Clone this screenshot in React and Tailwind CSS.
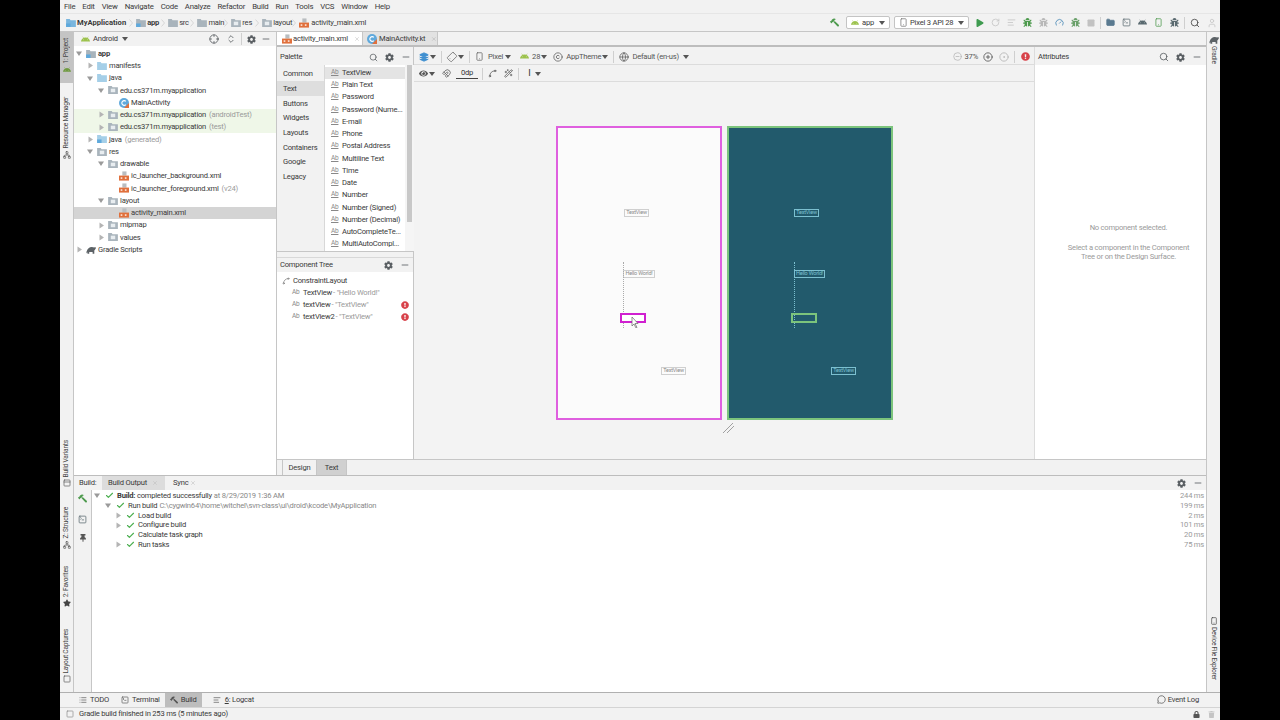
import { FaCog, FaBug, FaStar, FaThumbtack, FaAndroid, FaHammer, FaPlay, FaStop, FaEye, FaLock, FaTrash, FaExclamationCircle } from 'react-icons/fa'
import { Search, Minus, Crosshair, ChevronsUpDown, X, Layers, Smartphone, Globe, Copyright, RotateCw, AlignLeft, Gauge, Folder, SquareTerminal, User, Magnet, Wand2, CirclePlus, CircleMinus, CircleDot, List, MessageCircle, Square, Check, Spline, PanelTop, Network } from 'lucide-react'

const Arrow = ({ open }) => (
  <svg width="7" height="7" viewBox="0 0 7 7" className="shrink-0">
    {open ? <path d="M0 1.5h6L3 6z" fill="#9a9a9a" /> : <path d="M1.5 0.5v6L6 3.5z" fill="#b4b4b4" />}
  </svg>
)

const Caret = () => (
  <svg width="6" height="4" viewBox="0 0 6 4" className="shrink-0"><path d="M0 0h6L3 4z" fill="#555" /></svg>
)

const FolderIcon = ({ color = '#a9b4bc', dot = false, corner = false }) => (
  <svg width="10" height="8" viewBox="0 0 11 9" className="shrink-0">
    <path d="M0 0h4l1 1.5h6V9H0z" fill={color} />
    {dot && <rect x="3" y="3" width="5" height="4" fill="#e8edf0" />}
    {corner && <rect x="0" y="5" width="5" height="4" fill="#5fa9dc" />}
  </svg>
)

const XmlIcon = () => (
  <svg width="10" height="10" viewBox="0 0 12 11" className="shrink-0">
    <path d="M4 0h5v5H4z" fill="#b9bdc0" />
    <rect x="0" y="5" width="12" height="6" fill="#e0703c" />
    <rect x="2" y="7" width="2" height="2" fill="#fbe2d6" />
    <rect x="7" y="7" width="2" height="2" fill="#fbe2d6" />
  </svg>
)

const ClassIcon = () => (
  <svg width="10" height="10" viewBox="0 0 10 10" className="shrink-0">
    <circle cx="5" cy="5" r="5" fill="#5fa9dc" />
    <path d="M6.8 3.4A2.3 2.3 0 1 0 6.8 6.6" stroke="#fff" strokeWidth="1.2" fill="none" />
    <path d="M5 10l5-5v5z" fill="#e0703c" />
  </svg>
)

const Turtle = () => (
  <svg width="11" height="8" viewBox="0 0 13 9" className="shrink-0">
    <path d="M1 9l1-3c1-3 3-5 6-5 2 0 3 1 4 0l1 1-1 2-1 1v4h-2V7H5v2H3l-.5-2z" fill="#5c6266" />
  </svg>
)

const Chev = ({ className = '' }) => (
  <svg width="10" height="10" viewBox="0 0 10 10" className={`shrink-0 ${className}`}><path d="M3.5 1.5L6.5 5l-3 3.5" stroke="#cfcfcf" strokeWidth="0.8" fill="none" /></svg>
)

const treeRows = [
  { d: 0, arrow: 'open', icon: <FolderIcon corner />, label: 'app', bold: true },
  { d: 1, arrow: 'closed', icon: <FolderIcon color="#a5cfe8" />, label: 'manifests' },
  { d: 1, arrow: 'open', icon: <FolderIcon color="#a5cfe8" />, label: 'java' },
  { d: 2, arrow: 'open', icon: <FolderIcon dot />, label: 'edu.cs371m.myapplication' },
  { d: 3, icon: <ClassIcon />, label: 'MainActivity' },
  { d: 2, arrow: 'closed', icon: <FolderIcon dot />, label: 'edu.cs371m.myapplication', note: '(androidTest)', green: true },
  { d: 2, arrow: 'closed', icon: <FolderIcon dot />, label: 'edu.cs371m.myapplication', note: '(test)', green: true },
  { d: 1, arrow: 'closed', icon: <FolderIcon color="#a5cfe8" corner />, label: 'java', note: '(generated)' },
  { d: 1, arrow: 'open', icon: <FolderIcon dot />, label: 'res' },
  { d: 2, arrow: 'open', icon: <FolderIcon dot />, label: 'drawable' },
  { d: 3, icon: <XmlIcon />, label: 'ic_launcher_background.xml' },
  { d: 3, icon: <XmlIcon />, label: 'ic_launcher_foreground.xml', note: '(v24)' },
  { d: 2, arrow: 'open', icon: <FolderIcon dot />, label: 'layout' },
  { d: 3, icon: <XmlIcon />, label: 'activity_main.xml', selected: true },
  { d: 2, arrow: 'closed', icon: <FolderIcon dot />, label: 'mipmap' },
  { d: 2, arrow: 'closed', icon: <FolderIcon dot />, label: 'values' },
  { d: 0, arrow: 'closed', icon: <Turtle />, label: 'Gradle Scripts' },
]

const paletteGroups = ['Common', 'Text', 'Buttons', 'Widgets', 'Layouts', 'Containers', 'Google', 'Legacy']
const paletteItems = ['TextView', 'Plain Text', 'Password', 'Password (Nume...', 'E-mail', 'Phone', 'Postal Address', 'Multiline Text', 'Time', 'Date', 'Number', 'Number (Signed)', 'Number (Decimal)', 'AutoCompleteTe...', 'MultiAutoCompl...']

const SideLabel = ({ children, icon, className = '' }) => (
  <div className={`flex flex-col items-center gap-[2px] text-[6.6px] leading-[13px] text-[#444] whitespace-nowrap ${className}`}>
    <span className="[writing-mode:vertical-rl] rotate-180">{children}</span>
    {icon}
  </div>
)

const Gear = () => <FaCog size={9} color="#5a5f63" />
const Dash = () => <Minus size={10} color="#5a5f63" strokeWidth={2} />
const Sep = ({ className = '' }) => <div className={`w-px h-[12px] bg-[#cfcfcf] shrink-0 ${className}`} />
const Err = ({ size = 9 }) => <FaExclamationCircle size={size} color="#d8424a" />

const TextBox = ({ className, children }) => (
  <div className={`absolute h-[8px] border flex items-center justify-center text-[5.5px] leading-none whitespace-nowrap ${className}`}>{children}</div>
)

export default function App() {
  return (
    <div className="w-[1280px] h-[720px] bg-black flex justify-center overflow-hidden font-['Roboto',sans-serif]">
      <div className="w-[1160px] h-[720px] bg-[#f2f2f2] flex flex-col text-[7.6px] tracking-[-0.22px] text-[#3a3a3a] relative">
        {/* Menu */}
        <div className="h-[13px] shrink-0 flex items-center pl-[4px] gap-[7px] leading-none text-[7.8px]">
          {['File', 'Edit', 'View', 'Navigate', 'Code', 'Analyze', 'Refactor', 'Build', 'Run', 'Tools', 'VCS', 'Window', 'Help'].map(m => (
            <span key={m}>{m}</span>
          ))}
        </div>

        {/* Nav bar and run toolbar */}
        <div className="h-[19px] shrink-0 flex items-center pl-[6px] border-t border-b border-t-[#e6e6e6] border-b-[#c6c6c6]">
          <FolderIcon color="#7ab6de" corner />
          <span className="font-bold ml-[1px] tracking-normal">MyApplication</span>
          <Chev />
          <FolderIcon corner />
          <span className="font-bold ml-[1px]">app</span>
          <Chev className="-ml-[1px]" />
          <FolderIcon />
          <span className="ml-[1px]">src</span>
          <Chev className="-ml-[1.5px]" />
          <FolderIcon />
          <span className="ml-[1px]">main</span>
          <Chev className="-ml-[3px]" />
          <FolderIcon dot />
          <span className="ml-[1px]">res</span>
          <Chev />
          <FolderIcon dot />
          <span className="ml-[1px]">layout</span>
          <Chev className="-ml-[3px]" />
          <XmlIcon />
          <span className="ml-[2px]">activity_main.xml</span>

          <div className="ml-auto flex items-center pr-[3px]">
            <FaHammer size={9} color="#4d9a4d" className="-scale-x-100" />
            <div className="ml-[7px] w-[44px] h-[13px] bg-white border border-[#c4c4c4] rounded-[2px] flex items-center px-[4px] gap-[3px]">
              <FaAndroid size={8} color="#9cc24c" />
              <span>app</span>
              <span className="ml-auto"><Caret /></span>
            </div>
            <div className="ml-[4px] w-[75px] h-[13px] bg-white border border-[#c4c4c4] rounded-[2px] flex items-center px-[4px] gap-[2px]">
              <Smartphone size={9} color="#777" />
              <span className="whitespace-nowrap">Pixel 3 API 28</span>
              <span className="ml-auto"><Caret /></span>
            </div>
            <div className="ml-[7px] flex items-center gap-[7px]">
              <FaPlay size={8} color="#3f9b50" />
              <RotateCw size={9} color="#c2c2c2" />
              <AlignLeft size={9} color="#c2c2c2" />
              <FaBug size={9} color="#4d9a4d" />
              <FaBug size={9} color="#b8b8b8" />
              <Gauge size={9} color="#3a7fb0" />
              <FaBug size={9} color="#6aa06a" />
              <FaStop size={8} color="#c2c2c2" />
              <Sep className="-mx-[2px]" />
              <Folder size={9} color="#5a7a90" fill="#5a7a90" />
              <SquareTerminal size={9} color="#5a6a70" />
              <FaAndroid size={9} color="#5a6a70" />
              <Smartphone size={9} color="#4d9a4d" />
              <FaBug size={9} color="#5a6a70" />
              <Sep className="-mx-[2px]" />
              <Search size={10} color="#444" />
              <User size={10} color="#c8c8c8" />
            </div>
          </div>
        </div>

        {/* Main */}
        <div className="flex-1 flex min-h-0">
          {/* Left tool strip */}
          <div className="w-[14px] shrink-0 flex flex-col items-center border-r border-[#c6c6c6]">
            <div className="w-full h-[51px] bg-[#c4c4c4] flex justify-center pt-[6px]">
              <SideLabel icon={<FaAndroid size={8} color="#6f9a40" />}>1: Project</SideLabel>
            </div>
            <SideLabel className="mt-[14px]" icon={<Network size={8} color="#555" />}>Resource Manager</SideLabel>
            <SideLabel className="mt-[281px]" icon={<PanelTop size={8} color="#555" />}>Build Variants</SideLabel>
            <SideLabel className="mt-[20px]" icon={<Network size={8} color="#555" />}>Z: Structure</SideLabel>
            <SideLabel className="mt-[17px]" icon={<FaStar size={8} color="#444" />}>2: Favorites</SideLabel>
            <SideLabel className="mt-[22px]" icon={<Square size={8} color="#555" />}>Layout Captures</SideLabel>
          </div>

          {/* Center */}
          <div className="flex-1 min-w-0 flex flex-col">
            <div className="h-[443px] shrink-0 flex">
              {/* Project panel */}
              <div className="w-[203px] shrink-0 flex flex-col bg-white border-r border-[#c6c6c6]">
                <div className="h-[14px] shrink-0 bg-[#f2f2f2] flex items-center pl-[7px] pr-[5px]">
                  <FaAndroid size={9} color="#9cc24c" />
                  <span className="ml-[3px] mr-[4px]">Android</span>
                  <Caret />
                  <div className="ml-auto flex items-center gap-[5px]">
                    <Crosshair size={10} color="#5a5f63" className="mr-[2px]" />
                    <ChevronsUpDown size={10} color="#5a5f63" />
                    <Sep className="h-[10px]" />
                    <Gear />
                    <Dash />
                  </div>
                </div>
                <div className="flex-1 pt-[1.5px]">
                  {treeRows.map((row, i) => (
                    <div
                      key={i}
                      className={`h-[12.25px] flex items-center leading-none whitespace-nowrap ${row.selected ? 'bg-[#d4d4d4]' : row.green ? 'bg-[#eff7e8]' : ''}`}
                      style={{ paddingLeft: 2 + 11 * row.d }}
                    >
                      <span className="w-[7px] flex justify-center shrink-0">
                        {row.arrow && <Arrow open={row.arrow === 'open'} />}
                      </span>
                      <span className="w-[15px] flex justify-center shrink-0">{row.icon}</span>
                      <span className={row.bold ? 'font-bold' : ''}>{row.label}</span>
                      {row.note && <span className="ml-[3px] text-[#9a9a9a]">{row.note}</span>}
                    </div>
                  ))}
                </div>
              </div>

              {/* Editor */}
              <div className="flex-1 min-w-0 flex flex-col">
                <div className="h-[15px] shrink-0 flex border-b-2 border-[#bdbdbd]">
                  <div className="w-[85px] bg-white flex items-center pl-[5px] gap-[1px]">
                    <XmlIcon />
                    <span>activity_main.xml</span>
                    <X size={6} color="#bbb" className="ml-[5px]" />
                  </div>
                  <div className="w-[76px] bg-[#e2e2e2] border-x border-[#c6c6c6] flex items-center pl-[4px] gap-[2px]">
                    <ClassIcon />
                    <span>MainActivity.kt</span>
                    <X size={6} color="#aaa" className="ml-[4px]" />
                  </div>
                </div>

                <div className="flex-1 min-h-0 flex">
                  {/* Palette and component tree */}
                  <div className="w-[137px] shrink-0 flex flex-col border-r border-[#c6c6c6]">
                    <div className="h-[18px] shrink-0 flex items-center pl-[3px] pr-[2px] pt-[2px]">
                      <span>Palette</span>
                      <div className="ml-auto flex items-center gap-[7px]">
                        <Search size={9} color="#5a5f63" />
                        <Gear />
                        <Dash />
                      </div>
                    </div>
                    <div className="h-[187px] shrink-0 flex border-b border-[#c6c6c6]">
                      <div className="w-[47px] shrink-0 flex flex-col pt-[1.5px]">
                        {paletteGroups.map((g, i) => (
                          <div key={g} className={`h-[14.7px] flex items-center pl-[6px] ${i === 1 ? 'bg-[#dedede]' : ''}`}>{g}</div>
                        ))}
                      </div>
                      <div className="w-[81px] shrink-0 bg-white border-l border-[#d8d8d8] pt-[1.5px]">
                        {paletteItems.map((item, i) => (
                          <div key={item} className={`h-[12.25px] flex items-center pl-[6px] whitespace-nowrap ${i === 0 ? 'bg-[#e4e4e4]' : ''}`}>
                            <span className="w-[11px] text-[6.5px] text-[#888] underline shrink-0">Ab</span>
                            <span>{item}</span>
                          </div>
                        ))}
                      </div>
                      <div className="flex-1 bg-[#f5f5f5]">
                        <div className="h-[157px] bg-[#c8c8c8] mx-[2px] w-[5px]" />
                      </div>
                    </div>
                    <div className="h-[5px] shrink-0" />
                    <div className="h-[15px] shrink-0 flex items-center pl-[3px] pr-[3px] border-t border-[#d8d8d8]">
                      <span>Component Tree</span>
                      <div className="ml-auto flex items-center gap-[7px]">
                        <Gear />
                        <Dash />
                      </div>
                    </div>
                    <div className="flex-1 bg-white pt-[2.5px]">
                      <div className="h-[12.2px] flex items-center pl-[5px] gap-[2px]">
                        <Spline size={8} color="#777" />
                        <span className="ml-[1px]">ConstraintLayout</span>
                      </div>
                      {[
                        ['TextView', '"Hello World!"', false],
                        ['textView', '"TextView"', true],
                        ['textView2', '"TextView"', true],
                      ].map(([name, val, err]) => (
                        <div key={name} className="h-[12.2px] flex items-center pl-[15px] pr-[4px] whitespace-nowrap">
                          <span className="w-[11px] text-[6.5px] text-[#888] shrink-0">Ab</span>
                          <span>{name}</span>
                          <span className="text-[#9a9a9a] ml-[1px]">- {val}</span>
                          {err && <span className="ml-auto"><Err size={8} /></span>}
                        </div>
                      ))}
                    </div>
                  </div>

                  {/* Design surface */}
                  <div className="w-[620px] shrink-0 flex flex-col">
                    <div className="h-[18px] shrink-0 flex items-center pl-[5px] pr-[4px] pt-[2px] border-b border-[#dcdcdc] text-[#555]">
                      <Layers size={10} color="#3f8fd0" fill="#3f8fd0" />
                      <span className="ml-[1px]"><Caret /></span>
                      <Sep className="ml-[5px]" />
                      <Smartphone size={10} color="#777" className="ml-[5px] rotate-45" />
                      <span className="ml-[1px]"><Caret /></span>
                      <Sep className="ml-[5px]" />
                      <Smartphone size={9} color="#666" className="ml-[5px]" />
                      <span className="ml-[4px] mr-[2px]">Pixel</span>
                      <Caret />
                      <FaAndroid size={9} color="#9cc24c" className="ml-[9px]" />
                      <span className="ml-[3px]">28</span>
                      <span className="ml-[1px]"><Caret /></span>
                      <Copyright size={10} color="#666" className="ml-[6px]" />
                      <span className="ml-[3px]">AppTheme</span>
                      <span className="ml-[1px]"><Caret /></span>
                      <Sep className="ml-[5px]" />
                      <Globe size={10} color="#666" className="ml-[5px]" />
                      <span className="ml-[3px] mr-[4px]">Default (en-us)</span>
                      <Caret />
                      <div className="ml-auto flex items-center">
                        <CircleMinus size={9} color="#b4b4b4" />
                        <span className="ml-[3px]">37%</span>
                        <CirclePlus size={10} color="#555" className="ml-[5px]" />
                        <CircleDot size={10} color="#b4b4b4" className="ml-[6px]" />
                        <Sep className="ml-[5px]" />
                        <span className="ml-[6px]"><Err /></span>
                      </div>
                    </div>
                    <div className="h-[17px] shrink-0 flex items-center pl-[5px] pt-[1px] border-b border-[#dcdcdc] text-[#333]">
                      <FaEye size={9} color="#555" />
                      <span className="ml-[1px]"><Caret /></span>
                      <Magnet size={9} color="#555" className="ml-[7px]" />
                      <span className="ml-[5px] px-[5px] border-b border-[#444] leading-[10px]">0dp</span>
                      <Sep className="ml-[4px]" />
                      <Spline size={9} color="#555" className="ml-[5px]" />
                      <Wand2 size={9} color="#555" className="ml-[7px]" />
                      <Sep className="ml-[5px]" />
                      <span className="ml-[9px] text-[9px] leading-none">I</span>
                      <span className="ml-[5px]"><Caret /></span>
                    </div>
                    {/* Blueprint and design views: free canvas */}
                    <div className="flex-1 min-h-0 bg-[#f3f3f3] pt-[44px] pl-[142px] flex items-start gap-[5px] relative">
                      <div className="w-[166px] h-[294px] shrink-0 bg-[#fbfbfb] border-2 border-[#df5fdf] relative text-[#8a8a8a]">
                        <TextBox className="left-[66px] top-[81px] w-[25px] border-[#cfcfcf]">TextView</TextBox>
                        <TextBox className="left-[65px] top-[142px] w-[32px] border-[#cfcfcf]">Hello World!</TextBox>
                        <div className="absolute left-[65px] top-[134px] h-[66px] border-l border-dotted border-[#aaa]" />
                        <div className="absolute left-[62px] top-[185px] w-[26px] h-[10px] border-2 border-[#d020d0] bg-white" />
                        <TextBox className="left-[103px] top-[239px] w-[25px] border-[#cfcfcf]">TextView</TextBox>
                        <svg width="8" height="11" viewBox="0 0 8 11" className="absolute left-[73px] top-[189px]">
                          <path d="M1 0v9l2-2 2 4 1-.5-2-4h3z" fill="#fff" stroke="#666" strokeWidth="0.7" />
                        </svg>
                      </div>
                      <div className="w-[166px] h-[294px] shrink-0 bg-[#225a6c] border-2 border-[#7cc47c] relative text-[#7cc0d0]">
                        <TextBox className="left-[65px] top-[81px] w-[25px] border-[#7cc0d0]">TextView</TextBox>
                        <TextBox className="left-[65px] top-[142px] w-[31px] border-[#7cc0d0]">Hello World!</TextBox>
                        <div className="absolute left-[65px] top-[134px] h-[66px] border-l border-dotted border-[#7cc0d0]" />
                        <div className="absolute left-[62px] top-[185px] w-[26px] h-[10px] border-2 border-[#7cc47c]" />
                        <TextBox className="left-[102px] top-[239px] w-[25px] border-[#7cc0d0]">TextView</TextBox>
                      </div>
                      <svg width="12" height="12" viewBox="0 0 12 12" className="absolute left-[309px] top-[340px]">
                        <path d="M0 11L10 1M4 11L11 4" stroke="#8a8a8a" strokeWidth="0.8" />
                      </svg>
                    </div>
                  </div>

                  {/* Attributes */}
                  <div className="flex-1 min-w-0 flex flex-col border-l border-[#dcdcdc]">
                    <div className="h-[18px] shrink-0 flex items-center pl-[3px] pr-[4px] pt-[2px]">
                      <span>Attributes</span>
                      <div className="ml-auto flex items-center gap-[7px]">
                        <Search size={10} color="#5a5f63" />
                        <Gear />
                        <Dash />
                      </div>
                    </div>
                    <div className="flex-1 bg-white flex flex-col items-center pt-[158px] pl-[16px] text-[#9a9a9a] text-center leading-[9.5px]">
                      <div>No component selected.</div>
                      <div className="mt-[10px]">Select a component in the Component</div>
                      <div>Tree or on the Design Surface.</div>
                    </div>
                  </div>
                </div>

                {/* Design / Text tabs */}
                <div className="h-[16px] shrink-0 flex border-t border-[#c6c6c6] bg-[#f2f2f2]">
                  <div className="w-[6px] border-r border-[#c6c6c6]" />
                  <div className="w-[33px] flex items-center justify-center">Design</div>
                  <div className="w-[31px] flex items-center justify-center bg-[#d0d0d0] border-x border-[#c6c6c6]">Text</div>
                </div>
              </div>
            </div>

            {/* Build panel */}
            <div className="flex-1 min-h-0 flex flex-col border-t border-[#bdbdbd] bg-white">
              <div className="h-[14px] shrink-0 bg-[#f2f2f2] flex items-center pl-[5px] pr-[3px]">
                <span className="w-[23px]">Build:</span>
                <div className="w-[63px] h-full bg-[#dcdcdc] flex items-center pl-[6px] gap-[5px]">
                  <span>Build Output</span>
                  <X size={6} color="#bbb" />
                </div>
                <span className="ml-[8px]">Sync</span>
                <X size={6} color="#bbb" className="ml-[2px]" />
                <div className="ml-auto flex items-center gap-[7px]">
                  <Gear />
                  <Dash />
                </div>
              </div>
              <div className="flex-1 min-h-0 flex">
                <div className="w-[18px] shrink-0 bg-[#f2f2f2] border-r border-[#c6c6c6] flex flex-col items-center pt-[4px] gap-[12px]">
                  <FaHammer size={9} color="#4d9a4d" className="-scale-x-100" />
                  <SquareTerminal size={9} color="#5a6a70" />
                  <FaThumbtack size={8} color="#555" className="-mt-[2px]" />
                </div>
                <div className="flex-1 min-w-0 pt-[1px] leading-none">
                  <div className="h-[9.8px] flex items-center pl-[1.5px] whitespace-nowrap">
                    <Arrow open />
                    <Check size={9} color="#4caf50" strokeWidth={3} className="ml-[4px] mr-[3.5px]" />
                    <span><b>Build:</b> completed successfully</span>
                    <span className="ml-[2px] text-[#888]">at 8/29/2019 1:36 AM</span>
                  </div>
                  <div className="h-[9.8px] flex items-center pl-[12.5px] whitespace-nowrap">
                    <Arrow open />
                    <Check size={9} color="#4caf50" strokeWidth={3} className="ml-[4px] mr-[3.5px]" />
                    <span>Run build</span>
                    <span className="ml-[2px] text-[#888]">C:\cygwin64\home\witchel\svn-class\ui\droid\kcode\MyApplication</span>
                  </div>
                  {[['Load build', true], ['Configure build', true], ['Calculate task graph', false], ['Run tasks', true]].map(([label, arrow]) => (
                    <div key={label} className="h-[9.8px] flex items-center pl-[22.5px] whitespace-nowrap">
                      <span className="w-[7px] shrink-0">{arrow && <Arrow />}</span>
                      <Check size={9} color="#4caf50" strokeWidth={3} className="ml-[4px] mr-[3.5px]" />
                      <span>{label}</span>
                    </div>
                  ))}
                </div>
                <div className="w-[60px] shrink-0 pt-[1px] pr-[2px] text-right text-[#9a9a9a] leading-[9.8px]">
                  {['244 ms', '199 ms', '2 ms', '101 ms', '20 ms', '75 ms'].map((t, i) => (
                    <div key={i}>{t}</div>
                  ))}
                </div>
              </div>
            </div>
          </div>

          {/* Right tool strip */}
          <div className="w-[14px] shrink-0 flex flex-col items-center border-l border-[#c6c6c6] text-[6.6px] leading-[13px] text-[#444] whitespace-nowrap">
            <div className="mt-[4px] flex flex-col items-center gap-[2px]">
              <Turtle />
              <span className="[writing-mode:vertical-rl]">Gradle</span>
            </div>
            <div className="mt-auto mb-[12px] flex flex-col items-center gap-[2px]">
              <Smartphone size={8} color="#444" />
              <span className="[writing-mode:vertical-rl]">Device File Explorer</span>
            </div>
          </div>
        </div>

        {/* Bottom tool bar */}
        <div className="h-[15px] shrink-0 flex items-center pl-[19px] pr-[21px] border-t border-[#b0b0b0]">
          <List size={8} color="#555" />
          <span className="ml-[3px]">TODO</span>
          <SquareTerminal size={8} color="#555" className="ml-[12px]" />
          <span className="ml-[3px]">Terminal</span>
          <div className="ml-[5px] w-[37px] h-full bg-[#bdbdbd] flex items-center justify-center gap-[3px]">
            <FaHammer size={8} color="#555" className="-scale-x-100" />
            <span>Build</span>
          </div>
          <AlignLeft size={8} color="#555" className="ml-[11px]" />
          <span className="ml-[4px]"><span className="underline">6</span>: Logcat</span>
          <div className="ml-auto flex items-center gap-[2px]">
            <MessageCircle size={9} color="#555" />
            <span>Event Log</span>
          </div>
        </div>

        {/* Status bar */}
        <div className="h-[13px] shrink-0 flex items-center pl-[6px] pr-[5px] border-t border-[#d4d4d4]">
          <Square size={8} color="#888" />
          <span className="ml-[5px]">Gradle build finished in 253 ms (5 minutes ago)</span>
          <div className="ml-auto flex items-center gap-[8px]">
            <FaLock size={7} color="#555" />
            <FaTrash size={7} color="#c4c4c4" />
          </div>
        </div>
      </div>
    </div>
  )
}
